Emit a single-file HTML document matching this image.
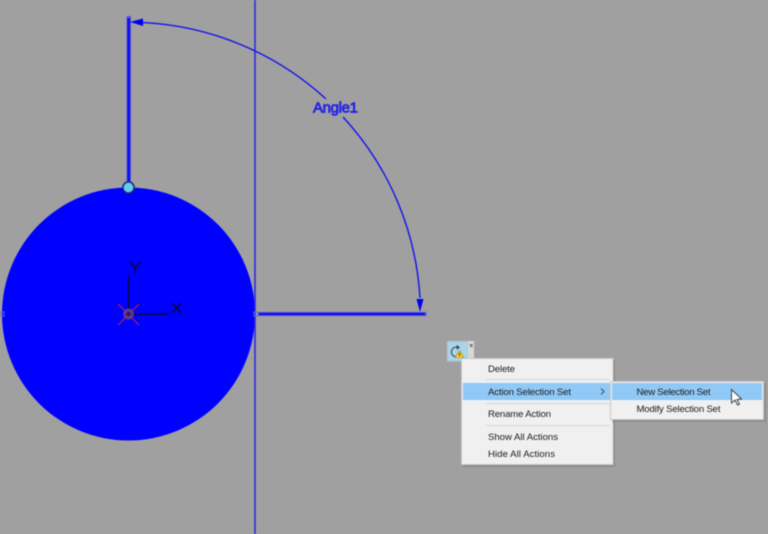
<!DOCTYPE html>
<html><head><meta charset="utf-8">
<style>
html,body{margin:0;padding:0;width:768px;height:534px;overflow:hidden;background:#a0a0a0}
#w{position:absolute;left:0;top:0;width:768px;height:534px;filter:blur(0.45px)}
svg{position:absolute;left:0;top:0}
text{font-family:"Liberation Sans",sans-serif}
.m{font-size:9.6px;fill:#1a1a1a}
</style></head><body><div id="w">
<svg width="768" height="534" viewBox="0 0 768 534">
<rect width="768" height="534" fill="#a0a0a0"/>
<circle cx="128.500" cy="314" r="126.500" fill="#0000ff"/>
<rect x="254.200" y="0" width="1.600" height="534" fill="#2a2ae0"/>
<rect x="126.500" y="16" width="4.500" height="172" fill="#5a5ad8"/>
<rect x="127.300" y="18" width="2.800" height="170" fill="#1010f0"/>
<rect x="258" y="312" width="168.500" height="4" fill="#5a5ad8"/>
<rect x="259" y="312.800" width="166" height="2.400" fill="#1010f0"/>
<rect x="0" y="312" width="4" height="4" fill="none" stroke="#6666cc" stroke-width="1"/>
<rect x="254" y="312" width="4" height="4" fill="none" stroke="#6666cc" stroke-width="1"/>
<path d="M143 22.600A291.500 291.500 0 0 1 326 99" fill="none" stroke="#1212ee" stroke-width="1.400"/>
<path d="M343 117A291.500 291.500 0 0 1 420 298" fill="none" stroke="#1212ee" stroke-width="1.400"/>
<polygon points="130,22 143,18.500 143,26" fill="#0000f0"/>
<polygon points="420,312 416.500,299 423.500,299" fill="#0000f0"/>
<circle cx="128.500" cy="187.500" r="5.600" fill="#66ccee" stroke="#103070" stroke-width="1.500"/>
<text x="313" y="112.500" font-size="15" fill="#2222e6" stroke="#2222e6" stroke-width="0.800" textLength="45">Angle1</text>
<g stroke="#08083a" stroke-width="1.500" fill="none">
<path d="M128.500 276V314H169"/>
<path d="M130 262L135 268L140 262M135 268V273"/>
<path d="M172 303L181 313M181 303L172 313"/>
</g>
<circle cx="128.500" cy="314" r="5.500" fill="#555588" opacity=".75"/>
<path d="M118 304L139 325M139 304L118 325" stroke="#c02040" stroke-width="1.100" fill="none"/>
<circle cx="128.500" cy="314" r="2" fill="#301850"/>
<!-- action icon -->
<rect x="447.500" y="341.500" width="20.500" height="19.500" fill="#a9d4ec" stroke="#b4c4cc" stroke-width="1"/>
<rect x="468" y="341" width="6" height="20" fill="#d8d8d8"/>
<path d="M470 344L472.500 347M472.500 344L470 347" stroke="#555" stroke-width=".9"/>
<path d="M456 347A5 5 0 1 0 461 354" fill="none" stroke="#303840" stroke-width="1"/>
<polygon points="456.500,345 460,347.500 456.500,349.500" fill="#303840"/>
<polygon points="459.500,350.500 464,357.500 455,357.500" fill="#f8d020" stroke="#a08010" stroke-width=".6"/>
<rect x="459.100" y="352.800" width=".9" height="3" fill="#222"/>
<!-- main menu -->
<rect x="463" y="360" width="152" height="107" fill="#777" opacity=".45"/>
<rect x="461.500" y="358.500" width="151.500" height="106" fill="#f0f0f0" stroke="#c8c8c8" stroke-width="1"/>
<rect x="463" y="383" width="148" height="17" fill="#90c8f6"/>
<path d="M485 379.500H610M485 403.500H610M485 425.500H610" stroke="#d6d6d6" stroke-width="1"/>
<text class="m" x="488" y="372" textLength="27" lengthAdjust="spacing">Delete</text>
<text class="m" x="488" y="395" textLength="83" lengthAdjust="spacing">Action Selection Set</text>
<path d="M601 388.500L604 391.500L601 394.500" fill="none" stroke="#444" stroke-width=".9"/>
<text class="m" x="488" y="417" textLength="63" lengthAdjust="spacing">Rename Action</text>
<text class="m" x="488" y="440" textLength="70" lengthAdjust="spacing">Show All Actions</text>
<text class="m" x="488" y="457" textLength="67" lengthAdjust="spacing">Hide All Actions</text>
<!-- submenu -->
<rect x="612" y="383" width="154" height="39" fill="#777" opacity=".45"/>
<rect x="610.500" y="381.500" width="153" height="38" fill="#f0f0f0" stroke="#c8c8c8" stroke-width="1"/>
<rect x="612" y="383" width="150" height="17" fill="#90c8f6"/>
<text class="m" x="636.500" y="395" textLength="74" lengthAdjust="spacing">New Selection Set</text>
<text class="m" x="636.500" y="412" textLength="84" lengthAdjust="spacing">Modify Selection Set</text>
<path d="M731.500 389.500V403L735 400L737.500 405L739.500 404L737 399.500L741.500 399Z" fill="#fff" stroke="#333" stroke-width=".9"/>
</svg>
</div></body></html>
